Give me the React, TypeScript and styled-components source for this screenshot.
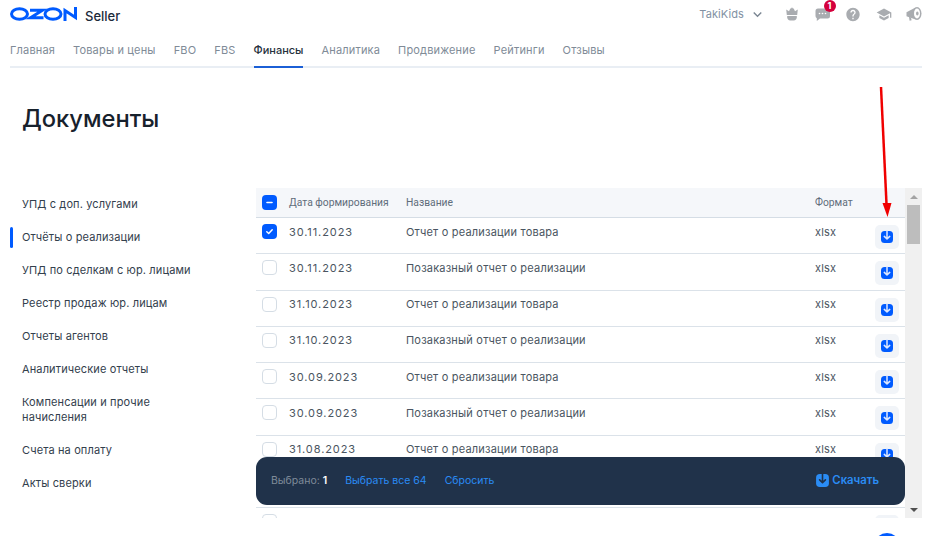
import styled, { createGlobalStyle } from 'styled-components'
import { MdHelp, MdKeyboardArrowDown, MdSchool } from 'react-icons/md'

const GlobalStyle = createGlobalStyle`
  html, body {
    margin: 0;
    height: 536px;
    overflow: hidden;
    background: #fff;
    font-family: Inter, "Noto Sans", sans-serif;
    color: #2e3a47;
  }
`

const Page = styled.div`
  position: relative;
  width: 936px;
  height: 536px;
  overflow: hidden;
`

const Header = styled.header`
  margin: 0 14px 0 10px;
  border-bottom: 2px solid #e9eef4;
  height: 68px;
  box-sizing: border-box;
`

const TopRow = styled.div`
  display: flex;
  align-items: center;
  height: 28px;
`

const Logo = styled.svg`
  display: block;
  width: 68px;
  height: 14px;
`

const SellerLabel = styled.span`
  margin-left: 7px;
  font-size: 13px;
  font-weight: 500;
  color: #1b2a3a;
  padding-top: 4px;
`

const Account = styled.div`
  margin-left: auto;
  display: flex;
  align-items: center;
  font-size: 11px;
  letter-spacing: 0.1px;
  color: #8291a3;
`

const Chevron = styled(MdKeyboardArrowDown)`
  margin-left: 5px;
  font-size: 17px;
  color: #7c8793;
`

const Tools = styled.div`
  display: flex;
  align-items: center;
  gap: 14.5px;
  margin-left: 18px;
`

const Tool = styled.span`
  position: relative;
  display: flex;
  align-items: center;
  justify-content: center;
  width: 16px;
  height: 17px;
  color: #a9acb0;
  font-size: 17px;
`

const Badge = styled.span`
  position: absolute;
  top: -6px;
  right: -5px;
  width: 12px;
  height: 12px;
  border-radius: 50%;
  background: #d4003c;
  color: #fff;
  font-size: 9px;
  font-weight: 700;
  line-height: 12px;
  text-align: center;
`

const Nav = styled.nav`
  display: flex;
  gap: 18px;
  height: 40px;
`

const NavItem = styled.a<{ $active?: boolean }>`
  display: flex;
  align-items: center;
  height: 40px;
  padding-top: 6px;
  box-sizing: border-box;
  font-size: 11px;
  letter-spacing: ${p => (p.$active ? '0' : '0.17px')};
  color: ${p => (p.$active ? '#26313d' : '#808b97')};
  font-weight: ${p => (p.$active ? 500 : 400)};
  border-bottom: 2px solid ${p => (p.$active ? '#1b5fd6' : 'transparent')};
`

const Title = styled.h1`
  margin: 36px 0 0 22px;
  height: 30px;
  font-size: 23.7px;
  line-height: 30px;
  font-weight: 500;
  color: #17212c;
`

const Content = styled.div`
  display: flex;
  margin-top: 54px;
  margin-left: 10px;
`

const Side = styled.aside`
  width: 246px;
  display: flex;
  flex-direction: column;
`

const SideItem = styled.a<{ $active?: boolean }>`
  position: relative;
  display: block;
  padding: 9px 0 9px 12px;
  box-sizing: border-box;
  width: 185px;
  font-size: 11px;
  line-height: 15px;
  letter-spacing: 0.13px;
  color: #33404d;

  ${p =>
    p.$active &&
    `
    &::before {
      content: '';
      position: absolute;
      left: 0;
      top: 6px;
      width: 3px;
      height: 21px;
      border-radius: 2px;
      background: #005bff;
    }
  `}
`

const TableWrap = styled.div`
  position: relative;
  display: flex;
  height: 330px;
  width: 666px;
`

const TableClip = styled.div`
  width: 649px;
  height: 330px;
  overflow: hidden;
`

const HeadRow = styled.div`
  display: grid;
  grid-template-columns: 33px 117px 409px 60px 30px;
  align-items: center;
  height: 30px;
  background: #f5f7fa;
  border-bottom: 1.5px solid #d5dde5;
  box-sizing: border-box;
  font-family: Roboto, sans-serif;
  font-size: 10.3px;
  color: #5f6d7b;
`

const Row = styled.div`
  display: grid;
  grid-template-columns: 33px 117px 409px 60px 30px;
  height: 36.25px;
  box-sizing: border-box;
  border-bottom: 1px solid #dbe2e9;
  font-size: 11px;
  letter-spacing: 0.2px;
  color: #4a5561;
`

const Cell = styled.div`
  padding-top: 6.5px;
  line-height: 14px;
`

const DateCell = styled(Cell)`
  letter-spacing: 0.9px;
`

const CheckCell = styled.div`
  padding: 6px 0 0 6px;
`

const HeadCheckCell = styled.div`
  padding-left: 6px;
  display: flex;
`

const Check = styled.span<{ $on?: boolean }>`
  display: flex;
  align-items: center;
  justify-content: center;
  width: 15px;
  height: 15px;
  border-radius: 4px;
  box-sizing: border-box;
  background: ${p => (p.$on ? '#005bff' : '#fff')};
  border: ${p => (p.$on ? 'none' : '1px solid #d5dde5')};
`

const Download = styled.button`
  display: flex;
  align-items: center;
  justify-content: center;
  width: 24px;
  height: 24px;
  margin: 7px 0 0 0;
  padding: 0;
  border: none;
  border-radius: 5px;
  background: #f1f4f8;
`

const Scrollbar = styled.div`
  width: 17px;
  height: 330px;
  background: #f0f0f0;
  display: flex;
  flex-direction: column;
  align-items: center;
  flex-shrink: 0;
`

const ArrowBox = styled.div`
  width: 17px;
  height: 17px;
  display: flex;
  align-items: center;
  justify-content: center;
`

const ArrowUp = styled.span`
  border: 4px solid transparent;
  border-top: 0;
  border-bottom: 4px solid #a3a3a3;
`

const ArrowDown = styled.span`
  border: 4px solid transparent;
  border-bottom: 0;
  border-top: 4px solid #505050;
`

const Thumb = styled.div`
  width: 13px;
  height: 39px;
  background: #bdbdbd;
`

const Spacer = styled.div`
  flex: 1;
`

const ActionBar = styled.div`
  position: absolute;
  left: 0;
  top: 269px;
  width: 649px;
  height: 48px;
  border-radius: 11px;
  background: #20324a;
  display: flex;
  align-items: center;
  padding: 0 26px 2px 15px;
  box-sizing: border-box;
  font-size: 10.5px;
`

const Muted = styled.span`
  color: #7f8b99;
`

const Count = styled.b`
  color: #fff;
  margin-left: 3px;
  font-weight: 600;
`

const BarLink = styled.a`
  margin-left: 18px;
  color: #2a8cf5;
`

const BarDownload = styled.a`
  margin-left: auto;
  display: flex;
  align-items: center;
  gap: 2px;
  color: #2a8cf5;
  font-weight: 600;
  font-size: 11.3px;
`

const RedArrow = styled.svg`
  position: absolute;
  left: 874px;
  top: 84px;
  width: 20px;
  height: 136px;
`

const ChatButton = styled.span`
  position: absolute;
  left: 874px;
  top: 533px;
  width: 26px;
  height: 26px;
  border-radius: 50%;
  background: #005bff;
`

const DownloadIcon = ({ bg, fg, size = 14 }: { bg: string; fg: string; size?: number }) => (
  <svg width={size} height={size} viewBox="0 0 14 14">
    <rect x="1" y="1" width="12" height="12" rx="3.5" fill={bg} />
    <path d="M7 0.500V8.800M4.300 6.400 7 9l2.700-2.600" fill="none" stroke={fg} strokeWidth="1.500" strokeLinecap="round" strokeLinejoin="round" />
  </svg>
)

const CrownIcon = () => (
  <svg width="14" height="14" viewBox="0 0 14 14">
    <path d="M1.200 2.500 4 4.300 5.300 1.600h.8L7 .3l.9 1.300h.8L10 4.300l2.800-1.800-.6 5.500H1.800z" fill="currentColor" />
    <path d="M2.200 9h9.600v1.200c0 1.700-1.300 3.300-3 3.300H5.200c-1.700 0-3-1.600-3-3.300z" fill="currentColor" />
  </svg>
)

const ChatIcon = () => (
  <svg width="15" height="14" viewBox="0 0 15 14">
    <path d="M3 1.500h9.500A2.500 2.500 0 0 1 15 4v5a2.500 2.500 0 0 1-2.500 2.500H5L1.800 14v-2.700A2.500 2.500 0 0 1 .5 9V4A2.500 2.500 0 0 1 3 1.500z" fill="currentColor" />
    <circle cx="4.500" cy="6.500" r=".8" fill="#fff" />
    <circle cx="7.500" cy="6.500" r=".8" fill="#fff" />
    <circle cx="10.500" cy="6.500" r=".8" fill="#fff" />
  </svg>
)

const MegaphoneIcon = () => (
  <svg width="16" height="16" viewBox="0 0 16 16">
    <path d="M.5 6.200 9.500 1.500v12L.5 10.200z" fill="currentColor" />
    <path d="M3 10.800 5 11.500l.6 2.800-2 .5z" fill="currentColor" />
    <ellipse cx="11" cy="7.500" rx="4.500" ry="6.500" fill="currentColor" />
    <ellipse cx="11" cy="7.500" rx="3" ry="5" fill="#fff" />
    <ellipse cx="11.300" cy="7.500" rx="1.300" ry="2" fill="currentColor" />
  </svg>
)

const navItems = ['Главная', 'Товары и цены', 'FBO', 'FBS', 'Финансы', 'Аналитика', 'Продвижение', 'Рейтинги', 'Отзывы']

const sideItems = [
  'УПД с доп. услугами',
  'Отчёты о реализации',
  'УПД по сделкам с юр. лицами',
  'Реестр продаж юр. лицам',
  'Отчеты агентов',
  'Аналитические отчеты',
  'Компенсации и прочие начисления',
  'Счета на оплату',
  'Акты сверки',
]

const rows = [
  { date: '30.11.2023', name: 'Отчет о реализации товара', checked: true },
  { date: '30.11.2023', name: 'Позаказный отчет о реализации' },
  { date: '31.10.2023', name: 'Отчет о реализации товара' },
  { date: '31.10.2023', name: 'Позаказный отчет о реализации' },
  { date: '30.09.2023', name: 'Отчет о реализации товара' },
  { date: '30.09.2023', name: 'Позаказный отчет о реализации' },
  { date: '31.08.2023', name: 'Отчет о реализации товара' },
  { date: '31.08.2023', name: 'Позаказный отчет о реализации' },
  { date: '31.07.2023', name: 'Отчет о реализации товара' },
]

const App = () => (
  <Page>
    <GlobalStyle />
    <Header>
      <TopRow>
        <Logo viewBox="0 0 68 14">
          <g fill="none" stroke="#005bff" strokeWidth="3">
            <ellipse cx="9.500" cy="7" rx="8" ry="5.300" />
            <path d="M20 3.200h12.500L20.500 10.800H33.500" />
            <ellipse cx="43" cy="7" rx="8" ry="5.300" />
            <path d="M55 14V3.500L65.500 10.500V0" />
          </g>
        </Logo>
        <SellerLabel>Seller</SellerLabel>
        <Account>
          TakiKids
          <Chevron />
        </Account>
        <Tools>
          <Tool>
            <CrownIcon />
          </Tool>
          <Tool>
            <ChatIcon />
            <Badge>1</Badge>
          </Tool>
          <Tool>
            <MdHelp />
          </Tool>
          <Tool>
            <MdSchool />
          </Tool>
          <Tool>
            <MegaphoneIcon />
          </Tool>
        </Tools>
      </TopRow>
      <Nav>
        {navItems.map(item => (
          <NavItem key={item} $active={item === 'Финансы'}>
            {item}
          </NavItem>
        ))}
      </Nav>
    </Header>
    <Title>Документы</Title>
    <Content>
      <Side>
        {sideItems.map(item => (
          <SideItem key={item} $active={item === 'Отчёты о реализации'}>
            {item}
          </SideItem>
        ))}
      </Side>
      <TableWrap>
        <TableClip>
          <HeadRow>
            <HeadCheckCell>
              <Check $on>
                <svg width="9" height="9" viewBox="0 0 9 9">
                  <path d="M2 4.500h5" stroke="#fff" strokeWidth="1.600" strokeLinecap="round" />
                </svg>
              </Check>
            </HeadCheckCell>
            <div>Дата формирования</div>
            <div>Название</div>
            <div>Формат</div>
            <div />
          </HeadRow>
          {rows.map((row, i) => (
            <Row key={i}>
              <CheckCell>
                <Check $on={row.checked}>
                  {row.checked && (
                    <svg width="9" height="9" viewBox="0 0 9 9">
                      <path d="M1.800 4.700 3.700 6.500 7.200 2.800" fill="none" stroke="#fff" strokeWidth="1.500" strokeLinecap="round" strokeLinejoin="round" />
                    </svg>
                  )}
                </Check>
              </CheckCell>
              <DateCell>{row.date}</DateCell>
              <Cell>{row.name}</Cell>
              <Cell>xlsx</Cell>
              <Download>
                <DownloadIcon bg="#005bff" fg="#dfe9ff" />
              </Download>
            </Row>
          ))}
        </TableClip>
        <Scrollbar>
          <ArrowBox>
            <ArrowUp />
          </ArrowBox>
          <Thumb />
          <Spacer />
          <ArrowBox>
            <ArrowDown />
          </ArrowBox>
        </Scrollbar>
        <ActionBar>
          <Muted>Выбрано:</Muted>
          <Count>1</Count>
          <BarLink>Выбрать все 64</BarLink>
          <BarLink>Сбросить</BarLink>
          <BarDownload>
            <DownloadIcon bg="#2a8cf5" fg="#20324a" size={15} />
            Скачать
          </BarDownload>
        </ActionBar>
      </TableWrap>
    </Content>
    <RedArrow viewBox="0 0 20 136">
      <path d="M7 3 12.500 120" stroke="#f00000" strokeWidth="2.500" fill="none" />
      <path d="M8.500 119h9l-4 14z" fill="#f00000" />
    </RedArrow>
    <ChatButton />
  </Page>
)

export default App
